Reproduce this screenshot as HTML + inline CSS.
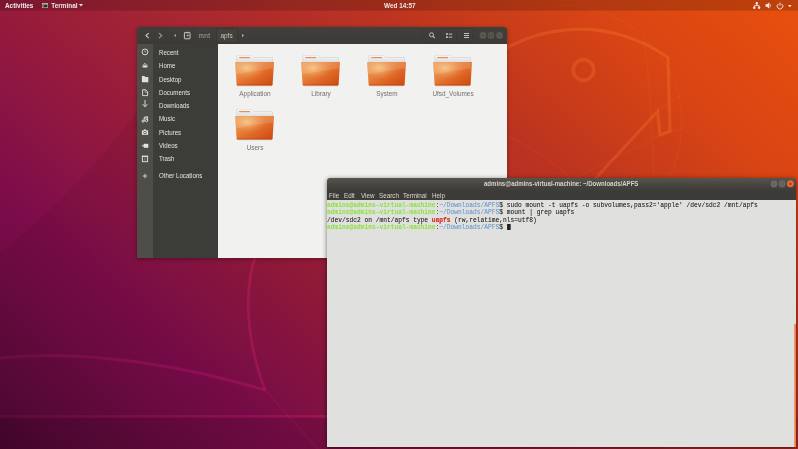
<!DOCTYPE html>
<html><head><meta charset="utf-8">
<style>
*{margin:0;padding:0;box-sizing:border-box}
html,body{width:798px;height:449px;overflow:hidden;background:#7a0e46}
body{position:relative;font-family:"Liberation Sans",sans-serif}
#wall{position:absolute;left:0;top:0;width:798px;height:449px;
background:linear-gradient(42deg,#48072f 0%,#540936 4%,#6e0b44 15%,#7c0c4a 22%,#8a1444 30%,#961a3c 37.5%,#a62632 50%,#bc3420 67%,#c83c1a 74%,#d84414 83%,#e64e0e 97%,#e85010 100%)}
#band{position:absolute;left:0;top:417px;width:798px;height:32px;background:rgba(0,0,0,.07)}
#wsvg{position:absolute;left:0;top:0;mix-blend-mode:overlay}
#topbar{position:absolute;left:0;top:0;width:798px;height:11px;background:linear-gradient(rgba(0,0,0,.18) 10px,rgba(0,0,0,.11) 10px);color:#ece8ea;font-weight:bold;font-size:6.4px}
#topbar span{position:absolute;top:1.6px;white-space:pre;line-height:7px}
/* nautilus */
#naut{position:absolute;left:137px;top:27px;width:370px;height:231px;border-radius:3px 3px 0 0;overflow:hidden;box-shadow:0 1px 4px rgba(0,0,0,.35)}
#nhead{position:absolute;left:0;top:0;width:370px;height:17px;background:linear-gradient(#403f3b,#3c3b37)}
#nside{position:absolute;left:0;top:17px;width:81px;height:214px;background:#3c3c38}
#nstrip{position:absolute;left:0;top:17px;width:16px;height:214px;background:#4e4d48}
#ncont{position:absolute;left:81px;top:17px;width:289px;height:214px;background:#f1f1f0}
.si{position:absolute;left:21.5px;font-size:6.6px;line-height:7px;color:#e8e5de;white-space:pre;transform:scaleX(.93);transform-origin:0 0}
.ico{position:absolute;left:4px;width:9px;height:9px}
.fold{position:absolute;width:42px;height:34px}
.flabel{position:absolute;width:66px;text-align:center;font-size:6.4px;line-height:7px;color:#72706e;white-space:pre}
.hb{position:absolute;top:1px;height:15px;border:1px solid rgba(0,0,0,.06);border-radius:1.5px}
.hl{position:absolute;font-size:6.4px;line-height:7px;color:#a9a7a1;white-space:pre}
/* terminal */
#term{position:absolute;left:327px;top:178px;width:469px;height:269px;border-radius:3px 3px 0 0;overflow:hidden;box-shadow:0 1px 5px rgba(0,0,0,.55)}
#thead{position:absolute;left:0;top:0;width:469px;height:22px;background:linear-gradient(#57544d,#46443f 35%,#3c3b37 60%,#3c3b37)}
#tbody{position:absolute;left:0;top:22px;width:469px;height:247px;background:#e0e0df}
.tm{position:absolute;top:14px;font-size:6.7px;line-height:7px;color:#dcd8d0;white-space:pre;transform:scaleX(.94);transform-origin:0 0}
.tl{position:absolute;left:0;font-family:"Liberation Mono",monospace;font-size:7px;white-space:pre;color:#2e2e2e;line-height:7px;text-shadow:0 0 .35px rgba(40,40,40,.45);transform:scaleX(.8915);transform-origin:0 0}
.g{color:#8ae23a;font-weight:bold;text-shadow:none}
.b{color:#729fcf;text-shadow:0 0 .35px rgba(100,150,210,.5)}
.r{color:#ef2929;font-weight:bold}
.d{color:#484848}
</style></head>
<body>
<div id="wall"></div>
<svg style="position:absolute;left:0;top:0" width="798" height="449"><path d="M0,252 Q70,200 140,108 L330,108 L330,449 L0,449 Z" fill="#000" fill-opacity=".05"/></svg>
<div id="band"></div>
<svg id="wsvg" width="798" height="449" viewBox="0 0 798 449" fill="none"><defs><filter id="wb" x="-5%" y="-5%" width="110%" height="110%"><feGaussianBlur stdDeviation=".45"/></filter></defs><g filter="url(#wb)">
  <g stroke="rgba(255,255,255,.26)" stroke-width="3.2" stroke-linejoin="miter">
    <path d="M470,76 A152,152 0 0 1 668,57.5 L670,131 L660,135 L657.5,111.5 L594,180"/>
    <circle cx="583.5" cy="70" r="10.3" stroke-width="3.6"/>
  </g>
  <g stroke="rgba(255,255,255,.11)" stroke-width="1">
    <path d="M560,5.5 A118,118 0 0 1 660,192"/>
    <path d="M643,33 C650,80 652,130 654,180"/>
    <path d="M657.5,111.5 L684,93 M684,128 L660,135 L556,188"/>
    <path d="M490,128 Q540,148 575,182"/>
  </g>
  <g stroke="rgba(255,255,255,.22)" stroke-width="2.8">
    <path d="M0,358 C60,352 150,356 265,390"/>
    <path d="M255,258 C244,290 246,340 265,390"/>
    <path d="M0,416.5 L330,416.5"/>
  </g>
  <g stroke="rgba(255,255,255,.12)" stroke-width="1.4">
    <path d="M265,390 L318,449"/>
  </g>
</g></svg>
<div id="topbar">
  <span style="left:5px">Activities</span>
  <svg style="position:absolute;left:42px;top:2.5px" width="6" height="5" viewBox="0 0 6 5"><rect x="0.25" y="0.25" width="5.5" height="4.5" fill="#2a2a2a" stroke="#d8d4d0" stroke-width=".5"/><rect x="0.5" y="0.5" width="5" height="1" fill="#d8d4d0"/><path d="M1.2,2.2 L2.2,3 L1.2,3.8" stroke="#d8d4d0" stroke-width=".5" fill="none"/></svg>
  <span style="left:51.3px">Terminal</span>
  <svg style="position:absolute;left:79px;top:4px" width="4" height="3" viewBox="0 0 4 3"><path d="M0,0 L4,0 L2,2.5Z" fill="#ece8ea"/></svg>
  <span style="left:384px">Wed 14:57</span>
  <svg style="position:absolute;left:752px;top:1px" width="9" height="9" viewBox="0 0 9 9">
    <circle cx="4.8" cy="2.2" r="1.2" fill="#f0ecec"/><circle cx="2.3" cy="6.8" r="1.2" fill="#f0ecec"/><circle cx="7.1" cy="6.8" r="1.2" fill="#f0ecec"/>
    <path d="M4.8,2.5 L4.8,4.6 M2.3,6.6 L2.3,4.6 L7.1,4.6 L7.1,6.6" stroke="#f0ecec" stroke-width=".8" fill="none"/></svg>
  <svg style="position:absolute;left:764.5px;top:1px" width="8" height="9" viewBox="0 0 8 9">
    <path d="M0.5,3.2 L2,3.2 L4.2,1.4 L4.2,7.6 L2,5.8 L0.5,5.8Z" fill="#f0ecec"/>
    <path d="M4.6,2 Q7.6,4.5 4.6,7" fill="#f0ecec" fill-opacity=".55"/></svg>
  <svg style="position:absolute;left:776px;top:1.5px" width="8" height="8" viewBox="0 0 8 8"><path d="M2.4,1.9 A2.8,2.8 0 1 0 5.6,1.9" stroke="#f0ecec" stroke-width=".9" fill="none"/><path d="M4,0.6 L4,3.8" stroke="#f0ecec" stroke-width=".9"/></svg>
  <svg style="position:absolute;left:788px;top:4.6px" width="4" height="3" viewBox="0 0 4 3"><path d="M0,0 L3.6,0 L1.8,2.2Z" fill="#ece8ea"/></svg>
</div>

<svg width="0" height="0" style="position:absolute">
  <defs>
    <radialGradient id="fhi" cx="0.3" cy="0.25" r="0.5">
      <stop offset="0" stop-color="#f6c27e"/>
      <stop offset=".5" stop-color="#f0a864" stop-opacity=".5"/>
      <stop offset="1" stop-color="#e8864a" stop-opacity="0"/>
    </radialGradient>
    <linearGradient id="fbase" x1="0" y1="0" x2="1" y2="1">
      <stop offset="0" stop-color="#ee9c5a"/>
      <stop offset="0.35" stop-color="#e8843e"/>
      <stop offset="0.6" stop-color="#e06a28"/>
      <stop offset="1" stop-color="#cc4610"/>
    </linearGradient>
    <linearGradient id="fpap" x1="0" y1="0" x2="0" y2="1">
      <stop offset="0" stop-color="#fafafa"/>
      <stop offset="1" stop-color="#dcdcdc"/>
    </linearGradient>
    <symbol id="folder" viewBox="0 0 42 34">
      <path d="M1.9,8 L1.9,0.9 Q1.9,0.25 2.6,0.25 L16.4,0.25 L18.6,2.5 L37,2.5 Q37.6,2.5 37.6,3.1 L37.6,8 Z" fill="url(#fpap)" stroke="#c8c8c8" stroke-width=".5"/>
      <rect x="4.2" y="2.1" width="11" height="1.1" fill="#e8824a"/>
      <path d="M0.2,7 L39,7 L37.6,29.6 Q37.6,30.4 36.8,30.4 L2.4,30.4 Q1.6,30.4 1.6,29.6 Z" fill="url(#fbase)"/>
      <path d="M0.2,7 L39,7 L37.6,29.6 Q37.6,30.4 36.8,30.4 L2.4,30.4 Q1.6,30.4 1.6,29.6 Z" fill="url(#fhi)"/>
      <path d="M0.5,7.3 L38.7,7.3 L38.3,13.5 Q20,15.5 1,19.5 Z" fill="#fff4e0" fill-opacity=".14"/>
      <path d="M1.6,29.4 L37.6,29.4 L37.6,29.8 Q37.6,30.4 36.8,30.4 L2.4,30.4 Q1.6,30.4 1.6,29.8Z" fill="#b0400c" fill-opacity=".55"/>
      <path d="M2,30.6 L37.4,30.6 L37,31.4 L2.4,31.4Z" fill="#000" fill-opacity=".07"/>
    </symbol>
  </defs>
</svg>

<div id="naut">
  <div id="nhead">
    <div class="hb" style="left:3px;width:27px"></div>
    <div class="hb" style="left:16.5px;width:0;border-width:0 0 0 1px"></div>
    <div class="hb" style="left:33.5px;width:23px"></div>
    <div class="hb" style="left:43.5px;width:0;border-width:0 0 0 1px"></div>
    <div class="hb" style="left:78.5px;width:22.5px;background:#42413c;border-color:rgba(0,0,0,.14)"></div>
    <div class="hb" style="left:285px;width:16px"></div>
    <div class="hb" style="left:303px;width:33px"></div>
    <div class="hb" style="left:319px;width:0;border-width:0 0 0 1px"></div>
    <svg style="position:absolute;left:0;top:0" width="370" height="17" viewBox="0 0 370 17" fill="none">
      <path d="M11.7,6.1 L9,8.6 L11.7,11.1" stroke="#cac8c2" stroke-width="1.15"/>
      <path d="M22,6.1 L24.7,8.6 L22,11.1" stroke="#a09e98" stroke-width="1.1"/>
      <path d="M39,7 L37,8.5 L39,10 Z" fill="#a8a6a0"/>
      <rect x="47.4" y="5.4" width="5.6" height="6.4" rx=".7" stroke="#d2d0ca" stroke-width=".95"/>
      <path d="M48.7,6.5 L51.7,6.5" stroke="#8a8882" stroke-width=".5"/>
      <path d="M50.6,7.6 Q49.4,7.8 49.6,9.2 L51.6,9.2 L51.6,8.2 Z" fill="#c0beb8"/>
      <path d="M105,6.8 L107.2,8.5 L105,10.2 Z" fill="#a8a6a0"/>
      <circle cx="294.5" cy="7.8" r="2" stroke="#c2c0ba" stroke-width="1"/>
      <path d="M296,9.3 L297.8,11.2" stroke="#c2c0ba" stroke-width="1.2"/>
      <rect x="309" y="6.2" width="1.8" height="1.8" fill="#c2c0ba"/>
      <rect x="309" y="9.2" width="1.8" height="1.8" fill="#c2c0ba"/>
      <rect x="311.8" y="6.6" width="3.4" height="1" fill="#c2c0ba"/>
      <rect x="311.8" y="9.6" width="3.4" height="1" fill="#c2c0ba"/>
      <rect x="327" y="6" width="5" height="1" fill="#c2c0ba"/>
      <rect x="327" y="8" width="5" height="1" fill="#c2c0ba"/>
      <rect x="327" y="10" width="5" height="1" fill="#c2c0ba"/>
      <circle cx="346" cy="8.4" r="3.4" fill="#5a5954"/>
      <circle cx="354" cy="8.4" r="3.4" fill="#5a5954"/>
      <circle cx="362.5" cy="8.4" r="3.4" fill="#5a5954"/>
      <path d="M344.6,8.4 L347.4,8.4" stroke="#45443f" stroke-width=".8"/>
      <rect x="352.6" y="7" width="2.8" height="2.8" stroke="#45443f" stroke-width=".6"/>
      <path d="M361.4,7.3 L363.6,9.5 M363.6,7.3 L361.4,9.5" stroke="#45443f" stroke-width=".6"/>
    </svg>
    <div class="hl" style="left:61.6px;top:5px;letter-spacing:.35px">mnt</div>
    <div class="hl" style="left:83.5px;top:5px;color:#c8c6c0">apfs</div>
  </div>
  <div id="nside"></div>
  <div id="nstrip"></div>
  <div id="ncont"></div>
  <svg style="position:absolute;left:0;top:17px" width="16" height="214" viewBox="0 0 16 214" fill="none" stroke="#e6e4df">
    <circle cx="8" cy="7.9" r="2.9" stroke-width=".9"/>
    <path d="M8,6.6 L8,8 L9,7.4" stroke-width=".6"/>
    <path d="M5.2,22.2 L8,19.4 L10.8,22.2" stroke-width=".9"/>
    <path d="M5.6,22.6 L8,20.9 L10.4,22.6 L10.4,23.6 L5.6,23.6 Z" fill="#e6e4df" stroke="none"/>
    <path d="M4.9,32 L7.4,32 L8.2,32.9 L11.3,32.9 L11.3,38.3 L4.9,38.3 Z" fill="#e6e4df" stroke="none"/>
    <path d="M5.9,34 L10.3,34 M5.9,36 L10.3,36" stroke="#c8c6c0" stroke-width=".4"/>
    <path d="M5.6,45.7 L8.6,45.7 L10.6,47.7 L10.6,51.6 L5.6,51.6 Z" stroke-width=".9"/>
    <path d="M8.2,46 L8.2,48.2 L10.4,48.2" stroke-width=".6"/>
    <path d="M8,56 L8,62.6 M5.6,60.2 L8,62.8 L10.4,60.2" stroke-width=".9"/>
    <path d="M7.2,77.2 L7.2,73.2 L10.6,72.7 L10.6,76.6 M7.2,74.3 L10.6,73.8" stroke-width=".9"/>
    <circle cx="6.1" cy="77.1" r="1.1" stroke-width=".9"/><circle cx="9.6" cy="76.6" r="1.1" stroke-width=".9"/>
    <path d="M4.9,86.4 L6.4,86.4 L7.1,85.5 L8.9,85.5 L9.6,86.4 L11.1,86.4 L11.1,90.8 L4.9,90.8 Z" fill="#e6e4df" stroke="none"/>
    <ellipse cx="8" cy="88.5" rx="1.5" ry="1.1" stroke="#3c3c38" stroke-width=".7"/>
    <path d="M4.8,101.8 L6.6,100.3 L6.6,103.3 Z" fill="#e6e4df" stroke="none"/>
    <rect x="6.9" y="99.8" width="4.4" height="4" fill="#e6e4df" stroke="none"/>
    <rect x="5.4" y="112.4" width="5.2" height="5.3" stroke-width=".9"/>
    <path d="M4.8,112.1 L11.2,112.1" stroke-width=".9"/>
    <path d="M8,113.6 L8,116.6" stroke-width=".5"/>
    <path d="M8,129.8 L8,134.2 M5.8,132 L10.2,132" stroke-width="1" stroke="#cfcdc7"/>
  </svg>
  <div class="si" style="top:22px">Recent</div>
  <div class="si" style="top:35.3px">Home</div>
  <div class="si" style="top:48.5px">Desktop</div>
  <div class="si" style="top:61.8px">Documents</div>
  <div class="si" style="top:75px">Downloads</div>
  <div class="si" style="top:88.3px">Music</div>
  <div class="si" style="top:101.8px">Pictures</div>
  <div class="si" style="top:114.8px">Videos</div>
  <div class="si" style="top:128px">Trash</div>
  <div class="si" style="top:145.2px">Other Locations</div>

  <svg class="fold" style="left:98px;top:28px"><use href="#folder"/></svg>
  <svg class="fold" style="left:164px;top:28px"><use href="#folder"/></svg>
  <svg class="fold" style="left:230px;top:28px"><use href="#folder"/></svg>
  <svg class="fold" style="left:296px;top:28px"><use href="#folder"/></svg>
  <svg class="fold" style="left:98px;top:82px"><use href="#folder"/></svg>
  <div class="flabel" style="left:85px;top:62.5px">Application</div>
  <div class="flabel" style="left:151px;top:62.5px">Library</div>
  <div class="flabel" style="left:217px;top:62.5px">System</div>
  <div class="flabel" style="left:283px;top:62.5px">Ufsd_Volumes</div>
  <div class="flabel" style="left:85px;top:116.5px">Users</div>
</div>

<div id="term">
  <div id="thead">
    <div class="tm" style="left:157px;top:1.8px;font-weight:bold;font-size:6.6px;transform:scaleX(.92);transform-origin:0 0;color:#d6d2ca">admins@admins-virtual-machine: ~/Downloads/APFS</div>
    <svg style="position:absolute;left:0;top:0" width="467" height="22" viewBox="0 0 467 22">
      <circle cx="447" cy="6" r="3.4" fill="#6b6a64"/>
      <circle cx="455" cy="6" r="3.4" fill="#6b6a64"/>
      <circle cx="463.4" cy="5.8" r="3.5" fill="#ec6438"/>
      <path d="M445.6,6 L448.4,6" stroke="#55544e" stroke-width=".8"/>
      <rect x="453.7" y="4.7" width="2.6" height="2.6" fill="none" stroke="#55544e" stroke-width=".6"/>
      <path d="M462.3,4.9 L464.5,7.1 M464.5,4.9 L462.3,7.1" stroke="#4a2a1c" stroke-width=".65"/>
    </svg>
    <div class="tm" style="left:2px">File</div>
    <div class="tm" style="left:17px">Edit</div>
    <div class="tm" style="left:33.6px">View</div>
    <div class="tm" style="left:52px">Search</div>
    <div class="tm" style="left:75.7px">Terminal</div>
    <div class="tm" style="left:104.9px">Help</div>
  </div>
  <div id="tbody">
    <div class="tl" style="top:2.2px"><span class="g">admins@admins-virtual-machine</span><span class="d">:</span><span class="b">~/Downloads/APFS</span>$ sudo mount -t uapfs -o subvolumes,pass2='apple' /dev/sdc2 /mnt/apfs</div>
    <div class="tl" style="top:8.6px"><span class="g">admins@admins-virtual-machine</span><span class="d">:</span><span class="b">~/Downloads/APFS</span>$ mount | grep uapfs</div>
    <div class="tl" style="top:16.9px">/dev/sdc2 on /mnt/apfs type <span class="r">uapfs</span> (rw,relatime,nls=utf8)</div>
    <div class="tl" style="top:23.9px"><span class="g">admins@admins-virtual-machine</span><span class="d">:</span><span class="b">~/Downloads/APFS</span>$ <span style="display:inline-block;width:4.2px;height:6.4px;background:#1e1e1e;vertical-align:-1px"></span></div>
  </div>
</div>
<div style="position:absolute;left:794px;top:324px;width:2px;height:123px;background:linear-gradient(90deg,#f2a27a,#e07a4c)"></div>
</body></html>
